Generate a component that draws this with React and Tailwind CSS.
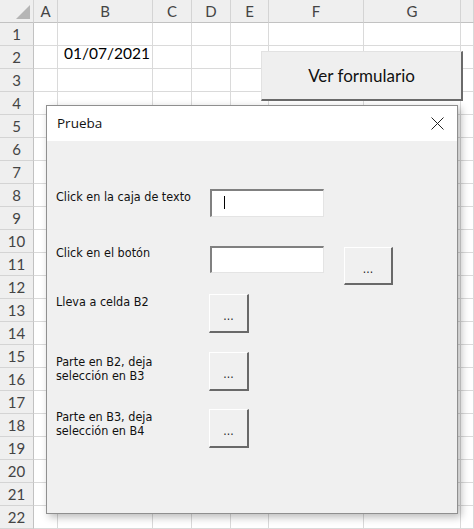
import React from "react";

const COLS = [
  { w: "w-[34px]", l: "" },
  { w: "w-[24px]", l: "A" },
  { w: "w-[95px]", l: "B" },
  { w: "w-[39px]", l: "C" },
  { w: "w-[39px]", l: "D" },
  { w: "w-[38px]", l: "E" },
  { w: "w-[95px]", l: "F" },
  { w: "w-[97px]", l: "G" },
  { w: "flex-1", l: "" },
];

const excelFont = { fontFamily: "Lato, 'Open Sans', sans-serif" };
const formFont = { fontFamily: "'DejaVu Sans Condensed', 'DejaVu Sans', sans-serif", fontStretch: "condensed" };

function HeaderRow() {
  return (
    <div className="flex h-[23px]">
      {COLS.map((c, i) => (
        <div
          key={i}
          className={`${c.w} shrink-0 h-full box-border border-r border-b border-r-[#d4d4d4] border-b-[#c2c2c2] bg-[#efefef] flex items-center justify-center text-[15px] text-[#444] relative`}
        >
          {i === 0 ? (
            <svg width="14" height="14" className="absolute right-[3px] bottom-[3px]">
              <polygon points="14,0 14,14 0,14" fill="#b5b5b5" />
            </svg>
          ) : (
            c.l
          )}
        </div>
      ))}
    </div>
  );
}

function Row({ n }) {
  return (
    <div className="flex h-[23px]">
      {COLS.map((c, i) => (
        <div
          key={i}
          className={`${c.w} shrink-0 h-full box-border border-r border-b ${
            i === 0
              ? "bg-[#efefef] border-r-[#c2c2c2] border-b-[#d4d4d4] flex items-center justify-center text-[15px] text-[#444]"
              : "bg-white border-[#dadada]"
          } ${i === 2 && n === 2 ? "flex items-end justify-end pr-[2px] pb-[3px] text-[15.5px] text-black" : ""}`}
        >
          {i === 0 ? n : i === 2 && n === 2 ? "01/07/2021" : null}
        </div>
      ))}
    </div>
  );
}

function TextBox({ h, cursor }) {
  return (
    <div
      className={`w-[114px] ${h} box-border bg-white border-t-2 border-l-2 border-t-[#808080] border-l-[#808080] border-b border-r border-b-[#e4e4e4] border-r-[#e4e4e4] relative`}
    >
      {cursor && <div className="absolute left-[12px] top-[5px] w-px h-[13px] bg-black" />}
    </div>
  );
}

function DotsButton({ w, h }) {
  return (
    <div
      className={`${w} ${h} box-border bg-[#f0f0f0] border-t border-l border-t-white border-l-white border-r-2 border-b-2 border-r-[#696969] border-b-[#696969] flex items-center justify-center text-[12px] text-[#222] pt-[6px]`}
    >
      ...
    </div>
  );
}

export default function App() {
  return (
    <div className="w-[474px] h-[529px] overflow-hidden relative bg-white" style={excelFont}>
      <HeaderRow />
      {Array.from({ length: 22 }, (_, i) => (
        <Row key={i} n={i + 1} />
      ))}

      {/* Ver formulario button */}
      <div className="absolute left-[261px] top-[51px] w-[202px] h-[50px] box-border bg-[#efefef] border-t border-l border-t-[#e2e2e2] border-l-[#e2e2e2] border-r-2 border-b-2 border-r-[#6a6a6a] border-b-[#6a6a6a] flex items-center justify-center text-[17px] text-[#111]">
        Ver formulario
      </div>

      {/* UserForm dialog */}
      <div className="absolute left-[46px] top-[105px] w-[412px] h-[409px] box-border border border-[#8f8f8f] bg-[#f0f0f0] shadow-[3px_3px_8px_rgba(0,0,0,0.28)] flex flex-col">
        <div
          className="h-[35px] shrink-0 bg-white flex items-center justify-between pl-[10px] pr-[13px] text-[13.5px] text-[#111]"
          style={{ fontFamily: "'Open Sans', 'Noto Sans', sans-serif" }}
        >
          <span>Prueba</span>
          <svg width="13" height="13" viewBox="0 0 13 13">
            <path d="M0.5 0.5 L12.5 12.5 M12.5 0.5 L0.5 12.5" stroke="#222" strokeWidth="1" fill="none" />
          </svg>
        </div>

        <div className="flex flex-col pl-[9px] text-[12.5px] leading-[14px] text-[#111]" style={formFont}>
          <div className="flex mt-[48px]">
            <div className="w-[154px] mt-[1px]">Click en la caja de texto</div>
            <TextBox h="h-[28px]" cursor />
          </div>

          <div className="flex mt-[29px]">
            <div className="w-[154px]">Click en el botón</div>
            <TextBox h="h-[27px]" />
            <div className="ml-[20px] mt-[1px]">
              <DotsButton w="w-[49px]" h="h-[38px]" />
            </div>
          </div>

          <div className="flex mt-[9px]">
            <div className="w-[153px] mt-[1px]">Lleva a celda B2</div>
            <DotsButton w="w-[40px]" h="h-[39px]" />
          </div>

          <div className="flex mt-[19px]">
            <div className="w-[153px] mt-[3px]">
              Parte en B2, deja
              <br />
              selección en B3
            </div>
            <DotsButton w="w-[40px]" h="h-[39px]" />
          </div>

          <div className="flex mt-[18px]">
            <div className="w-[153px] mt-[1px]">
              Parte en B3, deja
              <br />
              selección en B4
            </div>
            <DotsButton w="w-[40px]" h="h-[39px]" />
          </div>
        </div>
      </div>
    </div>
  );
}
